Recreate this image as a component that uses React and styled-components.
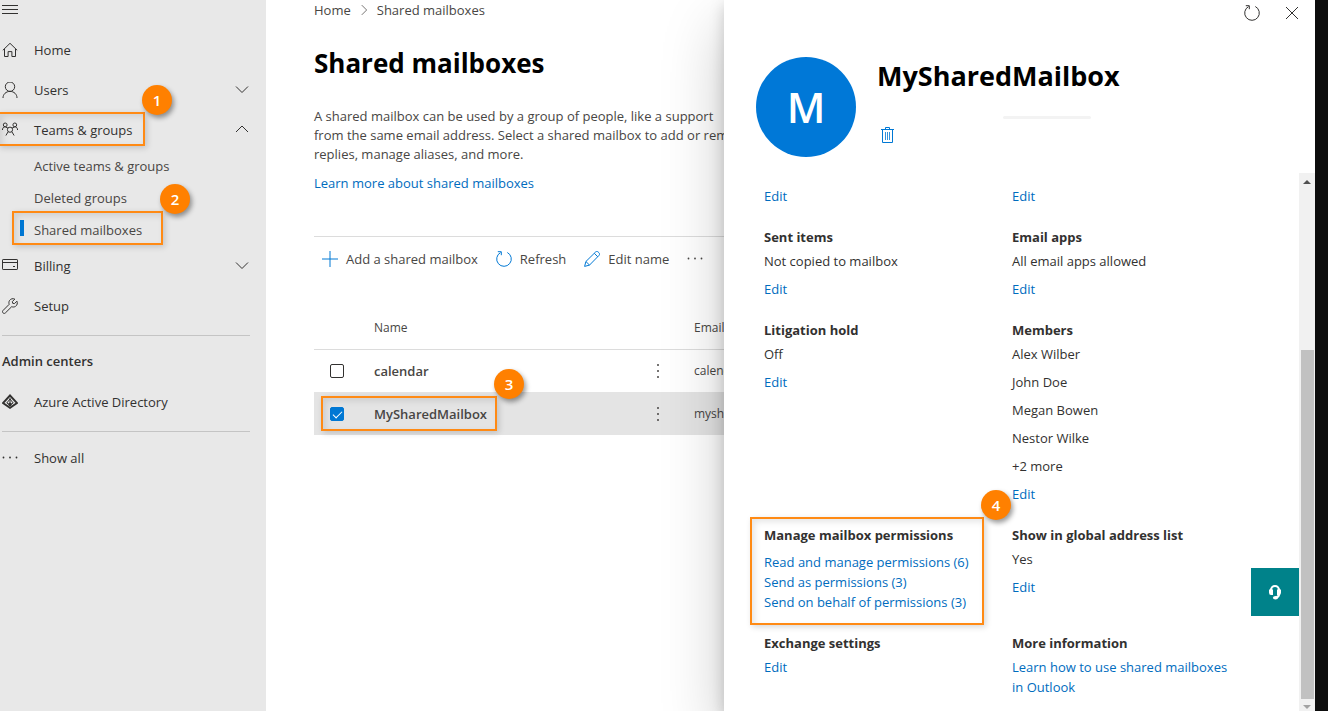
import React, { useState } from "react";
import styled, { createGlobalStyle } from "styled-components";

const MAILBOXES = [
	{ name: "calendar", email: "calendar" },
	{ name: "MySharedMailbox", email: "myshared" },
];

const MEMBERS = ["Alex Wilber", "John Doe", "Megan Bowen", "Nestor Wilke"];

// Numbered step marker around whatever it is placed in
function Step({ number, ...box }) {
	return (
		<Outline {...box}>
			<StepNumber>{number}</StepNumber>
		</Outline>
	);
}

function HomeIcon() {
	return (
		<Icon viewBox="0 0 16 16">
			<path d="M0.8 8.3 8 1.3l7.2 7M2.5 7v7.5h3.6V9.6h3.8v4.9h3.6V7" />
		</Icon>
	);
}

function UserIcon() {
	return (
		<Icon viewBox="0 0 16 16">
			<circle cx="8" cy="4.7" r="4.7" />
			<path d="M1 16c0-3.8 3-6.6 7-6.6s7 2.8 7 6.6" />
		</Icon>
	);
}

function GroupIcon() {
	return (
		<Icon viewBox="0 0 16 16">
			<circle cx="3.2" cy="2.9" r="1.9" />
			<circle cx="12.8" cy="2.9" r="1.9" />
			<circle cx="8" cy="7.7" r="2.6" />
			<path d="M.4 8C.5 6 1.6 4.8 3.2 4.8L6 6.2M15.6 8c-.1-2-1.2-3.2-2.8-3.2L10 6.2M3.9 13.5l2.3-3.9M12.1 13.5l-2.3-3.9" />
		</Icon>
	);
}

function CardIcon() {
	return (
		<Icon viewBox="0 0 16 16">
			<rect x="0.5" y="1.5" width="15" height="10" rx="0.6" />
			<path d="M0.5 4.5h15M11 8.5h2" />
		</Icon>
	);
}

function WrenchIcon() {
	return (
		<Icon viewBox="0 0 16 16">
			<path d="M14.9 3.2 12.5 5.6 10.7 5.3 10.4 3.5 12.8 1.1C10.8.2 8.7.8 7.6 2.4c-.8 1.2-.9 2.6-.4 3.9L1 12.5c-.7.7-.7 1.7 0 2.4s1.7.7 2.4 0l6.3-6.2c1.3.5 2.7.4 3.9-.4 1.6-1.1 2.2-3.2 1.3-5.1z" />
		</Icon>
	);
}

function AzureIcon() {
	return (
		<Icon viewBox="0 0 16 16">
			<path d="M8 1.5 1 9l7 4.9L15 9z" strokeWidth="1.9" />
			<path d="M8 4v8M8 5 4.8 9M8 5l3.2 4M4.8 9 8 10.8 11.2 9" />
			<circle cx="8" cy="10.4" r="1.3" fill="currentColor" />
		</Icon>
	);
}

function DotsIcon() {
	return (
		<Icon viewBox="0 0 16 16" $solid>
			<circle cx="1.5" cy="7.5" r="0.9" />
			<circle cx="8" cy="7.5" r="0.9" />
			<circle cx="14.5" cy="7.5" r="0.9" />
		</Icon>
	);
}

function MoreIcon() {
	return (
		<Icon viewBox="0 0 16 16" $solid>
			<circle cx="8" cy="2" r="1" />
			<circle cx="8" cy="8" r="1" />
			<circle cx="8" cy="14" r="1" />
		</Icon>
	);
}

function RefreshIcon() {
	return (
		<Icon viewBox="0 0 16 16">
			<path d="M4.5 1.6A7.3 7.3 0 1 0 11.3 1.5M1.8.7h3.5v3.5" />
		</Icon>
	);
}

function ChevronIcon({ up }) {
	return (
		<Icon viewBox="0 0 16 16">
			<path d={up ? "M2 10l6-6 6 6" : "M2 4.5l6 6 6-6"} />
		</Icon>
	);
}

function NavItem({ icon, label, chevron, children }) {
	return (
		<NavLink href="#">
			{icon}
			<NavText>{label}</NavText>
			{chevron && <ChevronIcon up={chevron === "up"} />}
			{children}
		</NavLink>
	);
}

function Sidebar() {
	return (
		<Side>
			<MenuButton aria-label="Collapse navigation">
				<Icon viewBox="0 0 16 16">
					<path d="M0 4.5h16M0 8.5h16M0 12.5h16" />
				</Icon>
			</MenuButton>
			<NavItem icon={<HomeIcon />} label="Home" />
			<NavItem icon={<UserIcon />} label="Users" chevron="down" />
			<NavItem icon={<GroupIcon />} label="Teams & groups" chevron="up">
				<Step number={1} $top={2} $left={-2} $width={147} $height={34} />
			</NavItem>
			<SubLink href="#">Active teams &amp; groups</SubLink>
			<SubLink href="#">Deleted groups</SubLink>
			<SubLink href="#" $current>
				Shared mailboxes
				<Step number={2} $top={-3} $left={12} $width={151} $height={34} />
			</SubLink>
			<NavItem icon={<CardIcon />} label="Billing" chevron="down" />
			<NavItem icon={<WrenchIcon />} label="Setup" />
			<SideRule />
			<SideHeading>Admin centers</SideHeading>
			<NavItem icon={<AzureIcon />} label="Azure Active Directory" />
			<SideRule />
			<NavItem icon={<DotsIcon />} label="Show all" />
		</Side>
	);
}

function MailboxTable() {
	const [selected, setSelected] = useState(["MySharedMailbox"]);

	const toggle = (name) =>
		setSelected((current) =>
			current.includes(name)
				? current.filter((item) => item !== name)
				: [...current, name]
		);

	return (
		<Table>
			<colgroup>
				<col width="60" />
				<col width="276" />
				<col width="44" />
				<col />
			</colgroup>
			<thead>
				<tr>
					<th />
					<th>Name</th>
					<th />
					<th>Email</th>
				</tr>
			</thead>
			<tbody>
				{MAILBOXES.map(({ name, email }) => (
					<Row key={name} $selected={selected.includes(name)}>
						<CheckCell>
							<Checkbox
								type="checkbox"
								aria-label={name}
								checked={selected.includes(name)}
								onChange={() => toggle(name)}
							/>
							{name === "MySharedMailbox" && (
								<Step number={3} $top={4} $left={7} $width={176} $height={35} />
							)}
						</CheckCell>
						<NameCell>{name}</NameCell>
						<td>
							<PlainButton aria-label="More actions">
								<MoreIcon />
							</PlainButton>
						</td>
						<td>{email}</td>
					</Row>
				))}
			</tbody>
		</Table>
	);
}

function Page() {
	return (
		<Main>
			<Breadcrumb>
				<a href="#">Home</a>
				<Icon viewBox="0 0 16 16" $size={12}>
					<path d="M5 1.5l6.5 6.5L5 14.5" />
				</Icon>
				<span>Shared mailboxes</span>
			</Breadcrumb>
			<h1>Shared mailboxes</h1>
			<Intro>
				A shared mailbox can be used by a group of people, like a support
				<br />
				from the same email address. Select a shared mailbox to add or rem
				<br />
				replies, manage aliases, and more.
			</Intro>
			<Link href="#">Learn more about shared mailboxes</Link>
			<Toolbar>
				<ToolButton>
					<Icon viewBox="0 0 16 16">
						<path d="M8 0v16M0 8h16" />
					</Icon>
					Add a shared mailbox
				</ToolButton>
				<ToolButton>
					<RefreshIcon />
					Refresh
				</ToolButton>
				<ToolButton>
					<Icon viewBox="0 0 16 16">
						<path d="M.6 15.4l1.3-4.900L11.7.9c.7-.6 1.7-.6 2.5.1l.8.8c.7.8.7 1.8.1 2.5L5.5 14.1zM1.9 10.5l3.6 3.6M10.3 2.3l3.5 3.5" />
					</Icon>
					Edit name
				</ToolButton>
				<ToolButton aria-label="More commands" $dark>
					<DotsIcon />
				</ToolButton>
			</Toolbar>
			<MailboxTable />
		</Main>
	);
}

function Field({ title, value, children }) {
	return (
		<Section>
			{title && <h3>{title}</h3>}
			{value && <p>{value}</p>}
			{children || <Link href="#">Edit</Link>}
		</Section>
	);
}

function DetailsPanel() {
	return (
		<Panel>
			<PanelActions>
				<PlainButton aria-label="Refresh">
					<RefreshIcon />
				</PlainButton>
				<PlainButton aria-label="Close">
					<Icon viewBox="0 0 16 16">
						<path d="M2 2l12 12M14 2L2 14" />
					</Icon>
				</PlainButton>
			</PanelActions>
			<PanelHeader>
				<Avatar>M</Avatar>
				<PanelTitle>
					<h2>MySharedMailbox</h2>
					<Smudge />
					<PlainButton aria-label="Delete mailbox" $blue>
						<Icon viewBox="0 0 16 16">
							<path d="M1 2.5h13M5.5 2.5v-2h4v2M2.5 2.5v13h10v-13" />
							<path d="M5.5 5v8M7.5 5v8M9.5 5v8" opacity="0.8" />
						</Icon>
					</PlainButton>
				</PanelTitle>
			</PanelHeader>
			<PanelBody>
				<Fields>
					<Field />
					<Field />
					<Field title="Sent items" value="Not copied to mailbox" />
					<Field title="Email apps" value="All email apps allowed" />
					<Field title="Litigation hold" value="Off" />
					<Section>
						<h3>Members</h3>
						{MEMBERS.map((member) => (
							<p key={member}>{member}</p>
						))}
						<p>+2 more</p>
						<Link href="#">Edit</Link>
					</Section>
					<Section>
						<h3>Manage mailbox permissions</h3>
						<LinkList>
							<Link href="#">Read and manage permissions (6)</Link>
							<Link href="#">Send as permissions (3)</Link>
							<Link href="#">Send on behalf of permissions (3)</Link>
						</LinkList>
						<Step number={4} $top={-8} $left={-14} $width={234} $height={108} />
					</Section>
					<Field title="Show in global address list" value="Yes" />
					<Field title="Exchange settings" />
					<Field title="More information">
						<Link href="#">
							Learn how to use shared mailboxes
							<br />
							in Outlook
						</Link>
					</Field>
				</Fields>
				<Scrollbar>
					<Arrow viewBox="0 0 16 16">
						<path d="M4 11l4-4 4 4z" />
					</Arrow>
					<Thumb />
					<Arrow viewBox="0 0 16 12" $faded>
						<path d="M4 6l4 4 4-4z" />
					</Arrow>
				</Scrollbar>
			</PanelBody>
			<HelpButton aria-label="Get support">
				<Icon viewBox="0 0 16 16">
					<path
						d="M4 8.8V6a4 4 0 0 1 8 0V10c0 1.8-.8 3-2.8 3.3"
						strokeWidth="2.2"
					/>
					<path d="M2 5.5h4v5.5H4Q2 11 2 8.5zM14 5.5h-4v5.5H12q2 0 2-2.5z" fill="currentColor" stroke="none" />
					<ellipse cx="8.5" cy="13.8" rx="2.6" ry="1.8" fill="currentColor" stroke="none" />
				</Icon>
			</HelpButton>
		</Panel>
	);
}

function App() {
	return (
		<Shell>
			<GlobalStyle />
			<Sidebar />
			<Workspace>
				<Page />
				<DetailsPanel />
			</Workspace>
			<Edge />
		</Shell>
	);
}
export default App;

const GlobalStyle = createGlobalStyle`
	* {
		box-sizing: border-box;
	}
	body {
		margin: 0;
		color: #323130;
		font: 13px/20px "Open Sans", "Noto Sans", sans-serif;
	}
	h1, h2, h3, p {
		margin: 0;
	}
	a {
		color: inherit;
		text-decoration: none;
	}
	button {
		border: 0;
		padding: 0;
		background: none;
		color: inherit;
		font: inherit;
		cursor: pointer;
	}
`;

const Shell = styled.div`
	display: flex;
	height: 100vh;
	overflow: hidden;
`;

const Workspace = styled.div`
	position: relative;
	flex: 1;
	min-width: 0;
	overflow: hidden;
`;

const Edge = styled.div`
	width: 13px;
	background: #0d0d0d;
`;

const Icon = styled.svg`
	flex: none;
	display: block;
	width: ${({ $size = 16 }) => $size}px;
	height: ${({ $size = 16 }) => $size}px;
	fill: ${({ $solid }) => ($solid ? "currentColor" : "none")};
	stroke: ${({ $solid }) => ($solid ? "none" : "currentColor")};
`;

const Outline = styled.span`
	position: absolute;
	top: ${({ $top }) => $top}px;
	left: ${({ $left }) => $left}px;
	width: ${({ $width }) => $width}px;
	height: ${({ $height }) => $height}px;
	border: 2px solid #ff8a14;
	box-shadow: 2px 2px 6px rgba(0, 0, 0, 0.16),
		inset 3px 3px 6px rgba(0, 0, 0, 0.1);
	pointer-events: none;
	z-index: 1;
`;

const StepNumber = styled.span`
	position: absolute;
	top: -29px;
	right: -29px;
	display: flex;
	align-items: center;
	justify-content: center;
	width: 30px;
	height: 30px;
	border-radius: 50%;
	background: #ff8000;
	color: #fff;
	font-size: 15px;
	font-weight: 600;
	box-shadow: 2px 3px 5px rgba(0, 0, 0, 0.4);
`;

const Side = styled.nav`
	display: flex;
	flex-direction: column;
	flex: none;
	width: 266px;
	background: #e8e8e8;
`;

const MenuButton = styled.button`
	height: 30px;
	padding: 1px 2px 13px;
`;

const NavLink = styled.a`
	position: relative;
	display: flex;
	align-items: center;
	gap: 16px;
	height: 40px;
	padding: 0 16px 0 2px;
`;

const NavText = styled.span`
	flex: 1;
`;

const SubLink = styled.a`
	position: relative;
	height: 32px;
	padding: 6px 0 6px 34px;
	color: #484644;

	${({ $current }) =>
		$current &&
		`
		&::before {
			content: "";
			position: absolute;
			left: 20px;
			top: 6px;
			width: 4px;
			height: 16px;
			background: #0078d4;
		}
	`}
`;

const SideRule = styled.hr`
	width: 248px;
	margin: 9px 0 6px 2px;
	border: 0;
	border-top: 1px solid #c4c4c4;
`;

const SideHeading = styled.h3`
	padding: 9px 2px 11px;
	font-size: 13px;
	font-weight: 600;
`;

const Main = styled.main`
	padding-left: 48px;
	color: #484644;

	> h1 {
		margin: 25px 0 26px;
		color: #000;
		font-size: 26px;
		line-height: 36px;
		font-weight: 700;
	}
`;

const Breadcrumb = styled.div`
	display: flex;
	align-items: center;
	gap: 7px;
`;

const Intro = styled.p`
	margin-bottom: 9px;
	line-height: 19px;
`;

const Link = styled.a`
	color: #006cbe;

	&:hover {
		text-decoration: underline;
	}
`;

const Toolbar = styled.div`
	display: flex;
	align-items: center;
	gap: 18px;
	height: 45px;
	margin-top: 43px;
	padding-left: 8px;
	border-top: 1px solid #dcdcdc;
`;

const ToolButton = styled.button`
	display: flex;
	align-items: center;
	gap: 8px;

	svg {
		color: ${({ $dark }) => ($dark ? "#484644" : "#0078d4")};
	}
`;

const Table = styled.table`
	width: 100%;
	margin-top: 27px;
	border-collapse: collapse;
	table-layout: fixed;
	font-size: 12px;

	th {
		height: 41px;
		padding: 0;
		font-weight: 400;
		text-align: left;
		border-bottom: 1px solid #dcdcdc;
	}

	td {
		height: 43px;
		padding: 0;
	}
`;

const Row = styled.tr`
	background: ${({ $selected }) => ($selected ? "#e4e4e4" : "none")};
`;

const CheckCell = styled.td`
	position: relative;
`;

const NameCell = styled.td`
	font-size: 13px;
	font-weight: 600;
`;

const Checkbox = styled.input`
	appearance: none;
	display: flex;
	justify-content: center;
	width: 14px;
	height: 14px;
	margin: 0 0 0 16px;
	border: 1px solid #323130;
	border-radius: 2px;
	background: #fff;

	&:checked {
		border-color: #0078d4;
		background: #0078d4;
	}

	&:checked::after {
		content: "";
		width: 4px;
		height: 8px;
		margin-top: 1px;
		border: solid #fff;
		border-width: 0 1px 1px 0;
		transform: rotate(45deg);
	}
`;

const PlainButton = styled.button`
	display: block;
	color: ${({ $blue }) => ($blue ? "#0078d4" : "inherit")};
`;

const Panel = styled.aside`
	position: absolute;
	top: 0;
	right: 0;
	bottom: 0;
	z-index: 2;
	display: flex;
	flex-direction: column;
	width: 591px;
	background: #fff;
	box-shadow: 0 26px 58px rgba(0, 0, 0, 0.22), 0 5px 14px rgba(0, 0, 0, 0.18);
`;

const PanelActions = styled.div`
	display: flex;
	flex: none;
	justify-content: flex-end;
	gap: 24px;
	height: 57px;
	padding: 5px 15px 0 0;

	button {
		align-self: flex-start;
	}
`;

const PanelHeader = styled.header`
	display: flex;
	flex: none;
	gap: 21px;
	height: 116px;
	padding-left: 32px;
`;

const Avatar = styled.div`
	display: flex;
	align-items: center;
	justify-content: center;
	width: 100px;
	height: 100px;
	border-radius: 50%;
	background: #0078d7;
	color: #fff;
	font-size: 42px;
	font-weight: 600;
`;

const PanelTitle = styled.div`
	h2 {
		color: #000;
		font-size: 27px;
		line-height: 38px;
		font-weight: 700;
	}

	button {
		margin: 8px 0 0 3px;
	}
`;

const Smudge = styled.div`
	width: 88px;
	height: 3px;
	margin: 21px 0 0 126px;
	border-radius: 2px;
	background: #f3f3f3;
`;

const PanelBody = styled.div`
	display: flex;
	flex: 1;
	min-height: 0;
`;

const Fields = styled.div`
	display: grid;
	grid-template-columns: 248px 1fr;
	align-content: start;
	row-gap: 21px;
	flex: 1;
	padding: 13px 0 0 40px;
	color: #323130;
`;

const Section = styled.section`
	position: relative;
	display: flex;
	flex-direction: column;
	align-items: flex-start;
	gap: 8px;

	h3 {
		margin-bottom: -4px;
		font-size: 13px;
		font-weight: 700;
	}
`;

const LinkList = styled.div`
	display: flex;
	flex-direction: column;
	padding-top: 3px;
`;

const Scrollbar = styled.div`
	display: flex;
	flex-direction: column;
	width: 16px;
	background: #f1f1f1;
`;

const Arrow = styled.svg`
	flex: none;
	width: 16px;
	height: ${({ $faded }) => ($faded ? 12 : 16)}px;
	fill: ${({ $faded }) => ($faded ? "#a3a3a3" : "#505050")};
`;

const Thumb = styled.div`
	flex: 1;
	margin: 161px 1px 0 2px;
	background: #c1c1c1;
`;

const HelpButton = styled.button`
	position: absolute;
	right: 16px;
	bottom: 95px;
	display: flex;
	align-items: center;
	justify-content: center;
	width: 48px;
	height: 48px;
	background: #00828a;
	color: #fff;
`;
